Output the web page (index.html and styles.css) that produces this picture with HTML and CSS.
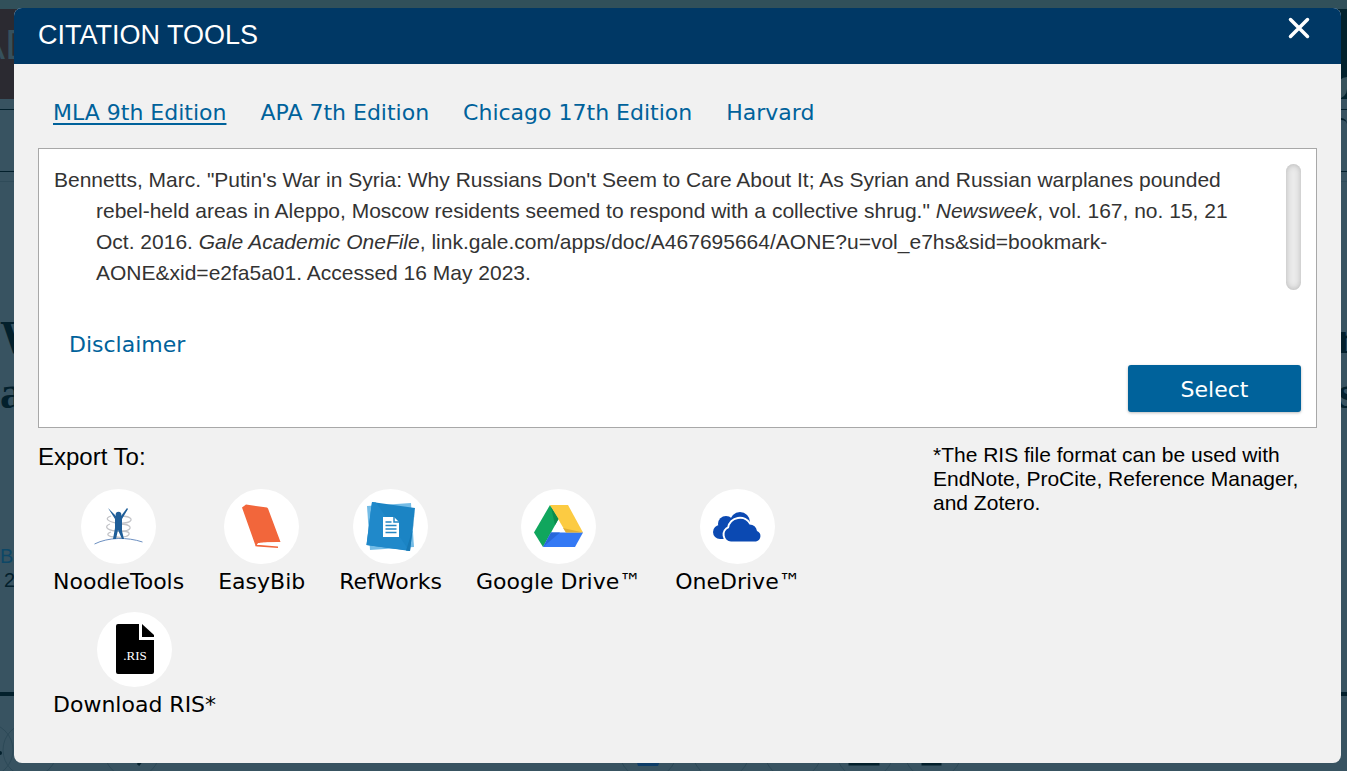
FILE: index.html
```html
<!DOCTYPE html>
<html lang="en">
<head>
<meta charset="utf-8">
<title>Citation Tools</title>
<link rel="stylesheet" href="styles.css">
</head>
<body>
<div class="stage">
  <div class="page" aria-hidden="true">
    <div class="page-banner"><span class="page-brand">AD</span><span class="page-swoosh"></span></div>
    <div class="page-nav"><span class="page-user"></span></div>
    <div class="page-sub"></div>
    <div class="page-heading"><span>W</span><span>r</span></div>
    <div class="page-heading"><span>a</span><span>s</span></div>
    <div class="page-meta"><span class="page-author">B</span><span class="page-date">2</span></div>
    <div class="page-tools">
      <svg class="page-icons" width="1000" height="75" viewBox="0 0 1000 75" fill="none">
        <g stroke="#2c4957"><circle cx="-14" cy="54" r="27"/><circle cx="30" cy="54" r="27"/><circle cx="132" cy="54" r="28"/><circle cx="648" cy="54" r="29"/><circle cx="721" cy="54" r="29"/><circle cx="793" cy="54" r="29"/><circle cx="865" cy="54" r="29"/><circle cx="933" cy="54" r="29"/></g>
        <path d="M635 60h27l-4 10h-20z" fill="#0d3d68"/>
        <path d="M850 64v4h28v-4M923 64v4h17v-4M138 69l5-6" stroke="#03202c" stroke-width="3"/>
        <circle cx="0" cy="57" r="2" fill="#03202c"/>
      </svg>
    </div>
  </div>

  <main class="dialog" role="dialog" aria-labelledby="dialog-title">
    <header class="dialog-header">
      <h1 class="dialog-title" id="dialog-title">CITATION TOOLS</h1>
      <button class="close" type="button" aria-label="Close">
        <svg width="22" height="22" viewBox="0 0 22 22" fill="none" stroke="#fff" stroke-width="3.500" stroke-linecap="round"><path d="M2.500 2.500l17 17M19.500 2.500l-17 17"/></svg>
      </button>
    </header>
    <div class="dialog-body">
      <nav class="tabs" aria-label="Citation style">
        <a class="tab tab-active" href="#mla">MLA 9th Edition</a>
        <a class="tab" href="#apa">APA 7th Edition</a>
        <a class="tab" href="#chicago">Chicago 17th Edition</a>
        <a class="tab" href="#harvard">Harvard</a>
      </nav>
      <section class="citation-box" id="mla">
        <div class="citation-scroll">
          <p class="citation">Bennetts, Marc. "Putin's War in Syria: Why Russians Don't Seem to Care About It; As Syrian and Russian warplanes pounded rebel-held areas in Aleppo, Moscow residents seemed to respond with a collective shrug." <em>Newsweek</em>, vol. 167, no. 15, 21 Oct. 2016. <em>Gale Academic OneFile</em>, link.gale.com/apps/doc/A467695664/AONE?u=vol_e7hs&amp;sid=bookmark-AONE&amp;xid=e2fa5a01. Accessed 16 May 2023.</p>
          <div class="scroll-thumb"></div>
        </div>
        <a class="disclaimer" href="#disclaimer">Disclaimer</a>
        <button class="select" type="button">Select</button>
      </section>
      <div class="lower">
        <section class="export">
          <h2 class="export-title">Export To:</h2>
          <div class="export-list">
            <button class="export-item" type="button">
              <span class="disc"><svg width="75" height="75" viewBox="0 0 75 75" fill="none">
                <g stroke="#c3c4c8" stroke-width="1.300"><path d="M30 27c-6 2-5 5 5 7 9 1 16-1 15-4-1-2-6-3-11-3"/><path d="M29 35c-6 2-4 6 6 7 9 1 15-1 14-4-1-2-5-3-10-3"/><path d="M30 43c-6 2-3 5 5 5 8 1 14-1 13-4-1-2-5-2-9-2"/></g>
                <path d="M13.500 55c14-7 33-7 48-2" stroke="#6c8fc0" stroke-width="1"/>
                <g fill="#1f5e99"><circle cx="37.500" cy="25.500" r="2.800"/><path d="M27 19l8 8h5l6-8 1 1-6 10v12l2 8h-2l-4-9-2 9h-3l2-11V30z"/></g>
              </svg></span><span class="export-label">NoodleTools</span>
            </button>
            <button class="export-item" type="button">
              <span class="disc"><svg width="75" height="75" viewBox="0 0 75 75">
                <path d="M18 18.500l4-3 21 3 1 1 12.500 33.500-22.500 1-2 4z" fill="#f2663b"/>
                <path d="M33 57c0-4 6-3.500 23-4l-2 2.500v2z" fill="#fff"/><path d="M31 56l5 0 18 1.500v1.500l-21-1.500z" fill="#f2663b"/>
              </svg></span><span class="export-label">EasyBib</span>
            </button>
            <button class="export-item" type="button">
              <span class="disc"><svg width="75" height="75" viewBox="0 0 75 75">
                <path d="M14 17l44-3 3 44-44 3z" fill="#74bce6"/><path d="M19 13l43 6-5 43-43.500-6z" fill="#1b84c4"/><path d="M19 13l4 .6 33 47.900-42.500-5.500z" fill="#2089ca"/><path d="M62 19L57 62l-4-.5 7-22z" fill="#1678b4"/>
                <path d="M30 28h11l5 5v15H30z" fill="#fff"/><path d="M41 28v5h5M32.500 33h6M32.500 36.500h11M32.500 40h11M32.500 43.500h11" fill="none" stroke="#2586c3" stroke-width="1.500"/>
              </svg></span><span class="export-label">RefWorks</span>
            </button>
            <button class="export-item" type="button">
              <span class="disc"><svg width="75" height="75" viewBox="0 0 75 75">
                <path d="M29 16l8.500 14L22 58 13 43.500z" fill="#10a65d"/><path d="M29 16h18l15 27.500H45z" fill="#fccb42"/><path d="M30 43.500h32L54 58H22z" fill="#3479f4"/><path d="M37.500 30L34 36l-4-18z" fill="#0b8b4d"/><path d="M45 43.500l-3-4.500 20 4.500z" fill="#dfae36"/><path d="M30 43.500h9L22 58z" fill="#2867da"/>
              </svg></span><span class="export-label">Google Drive™</span>
            </button>
            <button class="export-item" type="button">
              <span class="disc"><svg width="75" height="75" viewBox="0 0 75 75">
                <g fill="#0b49b2"><circle cx="20" cy="43" r="7"/><circle cx="26" cy="35" r="8"/><circle cx="40" cy="33" r="10"/><path d="M20 33h26v17H20z"/></g>
                <g fill="#0b49b2" stroke="#fff" stroke-width="4" paint-order="stroke"><path d="M31 52.500a7 7 0 0 1-2-13.500 11 11 0 0 1 20.500-3.500 8 8 0 0 1 7.500 6.500 5.500 5.500 0 0 1-1 10.500z"/></g>
              </svg></span><span class="export-label">OneDrive™</span>
            </button>
            <button class="export-item" type="button">
              <span class="disc"><svg width="75" height="75" viewBox="0 0 75 75">
                <path d="M21 12h21v16h15v32a2 2 0 0 1-2 2H21a2 2 0 0 1-2-2V14a2 2 0 0 1 2-2z"/><path d="M45 12l12 11v2H45z"/>
                <text class="ris" x="38" y="48" text-anchor="middle">.RIS</text>
              </svg></span><span class="export-label">Download RIS*</span>
            </button>
          </div>
        </section>
        <p class="note">*The RIS file format can be used with EndNote, ProCite, Reference Manager, and Zotero.</p>
      </div>
    </div>
  </main>
</div>
</body>
</html>
```
FILE: styles.css
```css
* { box-sizing: border-box; }
body { margin: 0; background: #385361; font-family: "Liberation Sans", Arial, sans-serif; }
h1, h2, p { margin: 0; font-weight: 400; }
button { border: 0; padding: 0; background: none; color: inherit; cursor: pointer; }
svg { display: block; }

.stage { display: grid; min-height: 100vh; overflow: hidden; }
.page, .dialog { grid-area: 1 / 1; min-width: 0; }

.page { padding-top: 9px; background: linear-gradient(#31505a 9px, #385361 9px); color: #03202c; overflow: hidden; }
.page-banner { display: flex; justify-content: space-between; height: 90px; background: linear-gradient(90deg, #2b2a31 50%, #02222d 50%); overflow: hidden; }
.page-brand { margin-left: -23px; padding-top: 12px; font-size: 42px; color: #36505c; }
.page-swoosh { align-self: flex-end; width: 10px; height: 22px; background: #38535c; border-radius: 10px 0 10px 0; }
.page-nav { display: flex; justify-content: flex-end; height: 63px; margin: 10px 0 9px; padding-top: 8px; border-top: 1px solid #03202c; border-bottom: 1px solid #03202c; }
.page-user { width: 12px; height: 20px; border-top: 2px solid #03202c; border-radius: 8px; }
.page-sub { height: 129px; border-top: 1px solid #2f4b59; }
.page-heading { display: flex; justify-content: space-between; margin-right: -9px; font: bold 46px/55px "Liberation Serif", serif; }
.page-meta { display: flex; flex-direction: column; height: 272px; padding-top: 124px; font-size: 20px; line-height: 24px; }
.page-author { color: #0d4766; }
.page-date { padding-left: 4px; }
.page-tools { border-top: 4px solid #03202c; }

.dialog { display: flex; flex-direction: column; margin: 8px 6px 8px 14px; border-radius: 8px; background: #f1f1f1; overflow: hidden; color: #000; }
.dialog-header { display: flex; justify-content: space-between; align-items: flex-start; height: 56px; padding: 9px 31px 0 24px; background: #003865; color: #fff; }
.dialog-title { font-size: 27px; line-height: 36px; }
.dialog-body { padding: 33px 24px 24px; }

.tabs { display: flex; flex-wrap: wrap; gap: 34px; padding: 0 15px; }
.tab, .disclaimer, .select, .export-label { font-family: Verdana, "DejaVu Sans", sans-serif; font-size: 22px; line-height: 32px; }
.tab, .disclaimer { color: #00629b; text-decoration: none; }
.tab-active { text-decoration: underline; text-underline-offset: 3px; text-decoration-thickness: 2px; }

.citation-box { display: flex; flex-direction: column; align-items: flex-start; margin-top: 19px; padding: 15px; border: 1px solid #a8a8a8; background: #fff; }
.citation-scroll { display: flex; justify-content: space-between; width: 100%; height: 126px; }
.citation { flex: 1; padding-left: 42px; padding-right: 54px; text-indent: -42px; font-size: 21px; line-height: 31px; color: #333; }
.scroll-thumb { width: 15px; border-radius: 8px; background: #ebebeb; box-shadow: inset 0 0 6px #b4b4b4; }
.disclaimer { margin: 39px 0 0 15px; }
.select { align-self: flex-end; width: 173px; height: 47px; margin-top: 4px; padding-top: 2px; border-radius: 3px; background: #00629b; color: #fff; box-shadow: 0 1px 3px #bbb; }

.lower { display: flex; justify-content: space-between; }
.export { flex: 1; padding-top: 13px; }
.export-title { font-size: 24px; line-height: 32px; }
.export-list { display: flex; flex-wrap: wrap; gap: 13px 34px; padding: 16px 15px 0; }
.export-item { display: flex; flex-direction: column; align-items: center; }
.disc { width: 75px; height: 75px; border-radius: 50%; background: #fff; overflow: hidden; }
.export-label { line-height: 35px; }
.ris { fill: #fff; font: 13px "Liberation Serif", serif; }
.note { width: 384px; padding-top: 15px; font-size: 21px; line-height: 24px; }
```
